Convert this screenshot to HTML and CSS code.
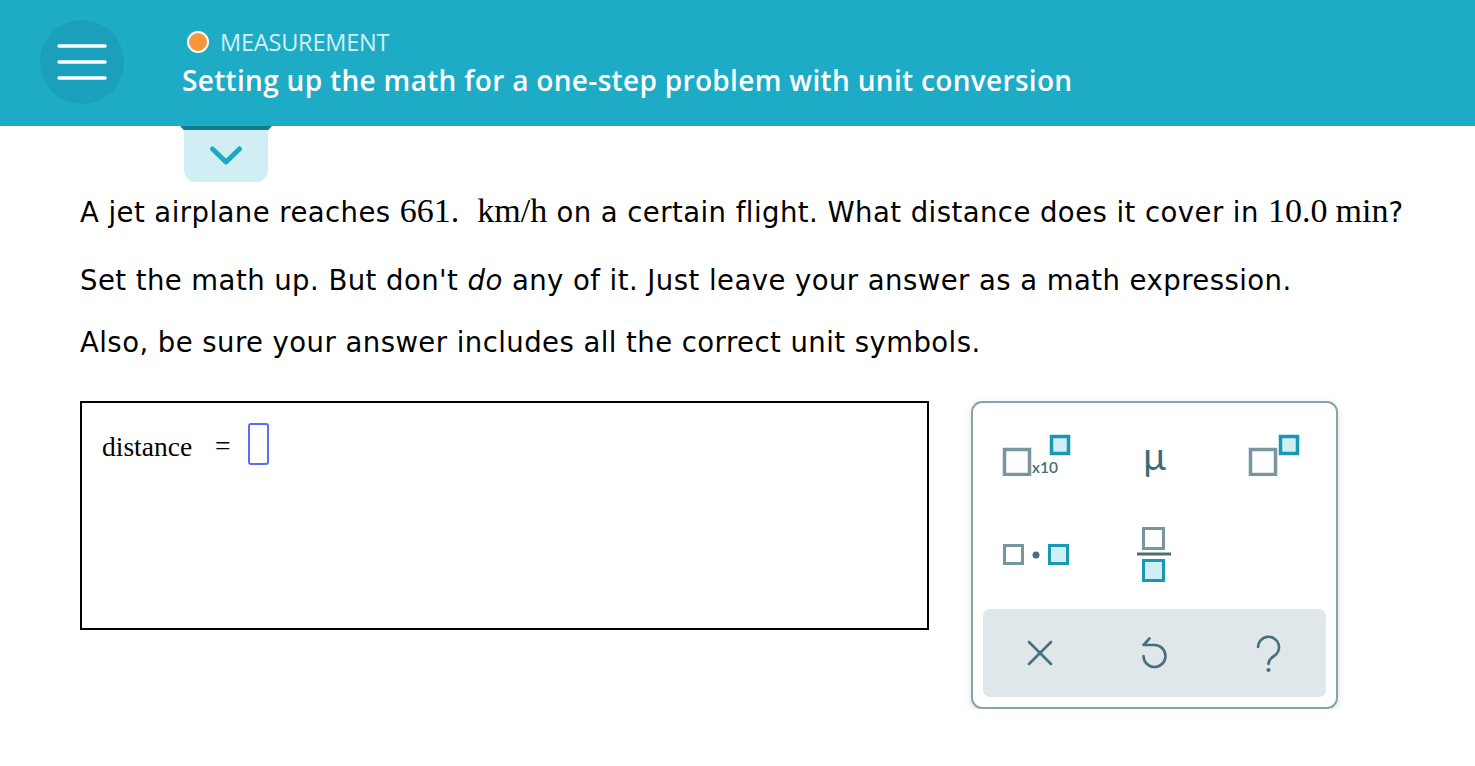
FILE: index.html
```html
<!DOCTYPE html>
<html>
<head>
<meta charset="utf-8">
<link rel="stylesheet" href="styles.css">
</head>
<body>
<header class="topbar">
  <div class="menu-btn">
    <svg width="52" height="36" viewBox="0 0 52 36"><g stroke="#fff" stroke-width="3.5" stroke-linecap="round"><line x1="3" y1="2" x2="49" y2="2"/><line x1="3" y1="18" x2="49" y2="18"/><line x1="3" y1="34" x2="49" y2="34"/></g></svg>
  </div>
  <div class="titles">
    <div class="topic"><span class="dot"></span>MEASUREMENT</div>
    <div class="title">Setting up the math for a one-step problem with unit conversion</div>
  </div>
</header>
<div class="tab-wrap">
  <div class="tab-lip"></div>
  <div class="tab">
    <svg width="36" height="24" viewBox="0 0 36 24"><polyline points="4.5,5 18,18 31.5,5" fill="none" stroke="#1da9c6" stroke-width="5" stroke-linecap="round" stroke-linejoin="round"/></svg>
  </div>
</div>
<main class="content">
  <p class="q first">A jet airplane reaches <span class="m">661.<span class="unit">km/h</span></span> on a certain flight. What distance does it cover in <span class="m">10.0<span class="unit sm">min</span></span>?</p>
  <p class="q">Set the math up. But don't <i>do</i> any of it. Just leave your answer as a math expression.</p>
  <p class="q">Also, be sure your answer includes all the correct unit symbols.</p>
  <div class="work">
    <div class="answer">
      <span class="var">distance</span><span class="eq">=</span><span class="slot"></span>
    </div>
    <div class="pad">
      <div class="keys">
        <div class="key">
          <svg width="76" height="42" viewBox="0 0 76 42"><rect x="2.5" y="15.5" width="25" height="25" fill="none" stroke="#7896a0" stroke-width="3.5"/><rect x="49.5" y="2.5" width="17" height="17" fill="#d0eef4" stroke="#1898b2" stroke-width="3.5"/><text x="30" y="38.5" font-family="Lato, sans-serif" font-size="15.5" font-weight="600" fill="#4a6e7a">x10</text></svg>
        </div>
        <div class="key mu">μ</div>
        <div class="key">
          <svg width="64" height="42" viewBox="0 0 64 42"><rect x="13.5" y="15.5" width="25" height="25" fill="none" stroke="#7896a0" stroke-width="3.5"/><rect x="43.5" y="2.5" width="17" height="17" fill="#d0eef4" stroke="#1898b2" stroke-width="3.5"/></svg>
        </div>
        <div class="key">
          <svg width="74" height="22" viewBox="0 0 74 22"><rect x="1.5" y="1.5" width="18" height="18" fill="none" stroke="#7896a0" stroke-width="3"/><circle cx="33" cy="11" r="3.5" fill="#4a6e7a"/><rect x="46.5" y="1.5" width="18" height="18" fill="#d0eef4" stroke="#1898b2" stroke-width="3"/></svg>
        </div>
        <div class="key">
          <svg width="36" height="56" viewBox="0 0 36 56"><rect x="7.5" y="1.5" width="20" height="20" fill="none" stroke="#7896a0" stroke-width="3"/><line x1="1" y1="27" x2="35" y2="27" stroke="#4a6e7a" stroke-width="3"/><rect x="7.5" y="33.5" width="20" height="20" fill="#d0eef4" stroke="#1898b2" stroke-width="3"/></svg>
        </div>
        <div class="key"></div>
      </div>
      <div class="actions">
        <div class="act">
          <svg width="26" height="26" viewBox="0 0 26 26"><g stroke="#456f7c" stroke-width="2.6" stroke-linecap="round"><line x1="2" y1="2" x2="24" y2="24"/><line x1="24" y1="2" x2="2" y2="24"/></g></svg>
        </div>
        <div class="act">
          <svg width="30" height="36" viewBox="0 0 30 36"><g fill="none" stroke="#456f7c" stroke-width="2.6" stroke-linecap="round" stroke-linejoin="round"><path d="M10.5 3.5 L4.5 10 L15.5 10 A11 11 0 1 1 4.5 21"/></g></svg>
        </div>
        <div class="act">
          <svg width="28" height="40" viewBox="0 0 28 40"><path d="M3 14 A10.5 10.5 0 1 1 18.5 23.5 C15 25.5 13.5 27 13.5 31" fill="none" stroke="#456f7c" stroke-width="2.6" stroke-linecap="round"/><circle cx="13.5" cy="37" r="2" fill="#456f7c"/></svg>
        </div>
      </div>
    </div>
  </div>
</main>
</body>
</html>
```

FILE: styles.css
```css
* { box-sizing: border-box; }
html, body { margin: 0; padding: 0; background: #fff; }
body { font-family: "DejaVu Sans", sans-serif; color: #000; }

.topbar {
  height: 126px;
  background: #1dabc6;
  display: flex;
  align-items: flex-start;
}
.menu-btn {
  width: 84px;
  height: 84px;
  border-radius: 50%;
  background: #1aa0ba;
  margin: 20px 0 0 40px;
  display: flex;
  align-items: center;
  justify-content: center;
}
.titles { margin-left: 58px; padding-top: 28px; }
.topic {
  display: flex;
  align-items: center;
  font-family: "Open Sans", sans-serif;
  font-size: 23.5px;
  color: #d2f1f6;
  letter-spacing: -0.2px;
  height: 28px;
  margin-left: 5px;
}
.dot {
  width: 22px;
  height: 22px;
  border-radius: 50%;
  background: #f7963a;
  border: 2px solid #fff;
  margin-right: 11px;
}
.title {
  font-family: "Open Sans", sans-serif;
  font-size: 28px;
  font-weight: 600;
  color: #fff;
  margin-top: 5px;
  letter-spacing: 0.32px;
}

.tab-wrap { padding-left: 180px; }
.tab-lip {
  width: 92px;
  height: 4px;
  background: #137c8c;
  clip-path: polygon(0 0, 100% 0, 96% 100%, 4% 100%);
}
.tab {
  width: 84px;
  height: 52px;
  margin-left: 4px;
  background: #d0eef4;
  border-radius: 0 0 12px 12px;
  display: flex;
  align-items: center;
  justify-content: center;
}

.content { padding: 0 0 0 80px; }
.q {
  font-family: "DejaVu Sans", sans-serif;
  font-size: 27.5px;
  letter-spacing: 0.45px;
  margin: 0;
  line-height: 32px;
  white-space: nowrap;
}
.q.first { margin-top: 14px; }
.q + .q { margin-top: 36px; }
.q + .q + .q { margin-top: 30px; }
.m {
  font-family: "Liberation Serif", "Times New Roman", serif;
  font-size: 34px;
  line-height: 20px;
  letter-spacing: 0;
}
.unit { margin-left: 18px; }
.unit.sm { margin-left: 8px; }

.work {
  display: flex;
  align-items: flex-start;
  margin-top: 43px;
}
.answer {
  width: 849px;
  height: 229px;
  border: 2px solid #000;
  display: flex;
  align-items: flex-start;
  padding: 20px 0 0 20px;
  font-family: "Liberation Serif", "Times New Roman", serif;
  font-size: 27.5px;
}
.var { margin-top: 8px; }
.eq { margin: 7px 0 0 23px; }
.slot {
  width: 21px;
  height: 42px;
  border: 2px solid #5a6bff;
  border-radius: 3px;
  margin-left: 17px;
}

.pad {
  width: 367px;
  height: 308px;
  margin-left: 42px;
  border: 2px solid #86a3ab;
  border-radius: 11px;
  box-shadow: 0 3px 8px rgba(0,0,0,0.12);
  padding: 0 10px 10px 10px;
  display: flex;
  flex-direction: column;
}
.keys {
  display: grid;
  grid-template-columns: repeat(3, 1fr);
  grid-template-rows: 104px 96px;
  height: 206px;
  flex: none;
}
.key {
  display: flex;
  align-items: center;
  justify-content: center;
}
.mu {
  font-family: "Lato", sans-serif;
  font-size: 38px;
  color: #3f6b77;
  padding-top: 0;
}
.actions {
  height: 88px;
  flex: none;
  background: #e0e7ea;
  border-radius: 7px;
  display: grid;
  grid-template-columns: repeat(3, 1fr);
  align-items: center;
  justify-items: center;
}
.act { display: flex; }
```
